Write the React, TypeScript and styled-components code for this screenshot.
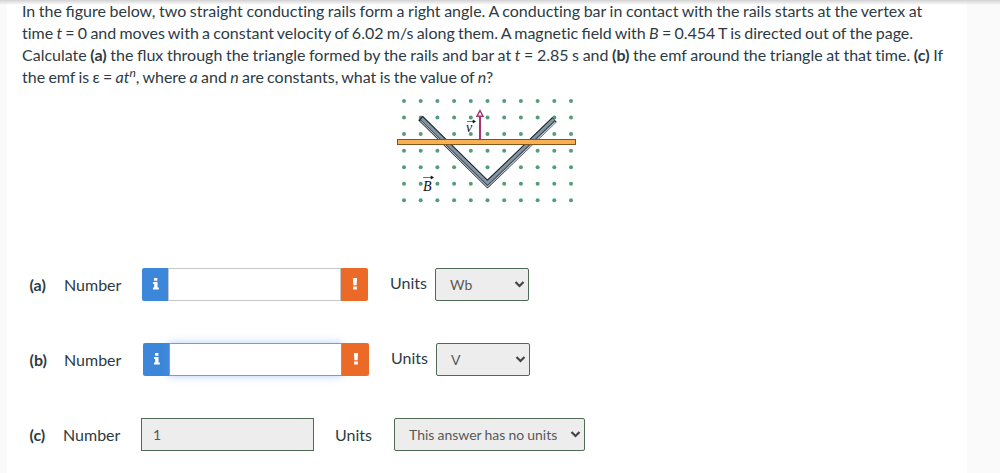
import React from "react";
import styled, { createGlobalStyle } from "styled-components";

const GlobalStyle = createGlobalStyle`
  * {
    box-sizing: border-box;
  }
  body {
    margin: 0;
    overflow: hidden;
    background: #fafafa;
    color: #2d3b45;
    font-family: Lato, sans-serif;
    font-size: 16px;
  }
`

const Page = styled.main`
  width: 960px;
  height: 473px;
  margin-left: 7px;
  padding-left: 15px;
  background: #fff;
`

const TopShadow = styled.div`
  position: absolute;
  top: 0;
  left: 0;
  right: 0;
  height: 5px;
  background: linear-gradient(#d2d2d2, rgba(255, 255, 255, 0));
`

const Question = styled.p`
  position: relative;
  margin: 0;
  line-height: 22px;
`

const Line = styled.span<{ $spacing: number }>`
  display: block;
  height: 22px;
  white-space: nowrap;
  word-spacing: ${({ $spacing }) => $spacing}px;
  font-variant-ligatures: none;

  sup {
    font-size: 12px;
    line-height: 0;
    vertical-align: 6px;
  }
`

// fi and fl are joined, the other pairs are not
const Joined = styled.span`
  font-variant-ligatures: normal;
`

const Figure = styled.svg`
  display: block;
  width: 190px;
  height: 115px;
  margin: 5px 0 0 370px;
`

const Answers = styled.div`
  display: flex;
  flex-direction: column;
  gap: 42px;
  margin-top: 60px;
`

const Row = styled.div`
  display: flex;
  align-items: center;
  height: 33px;
  padding-left: 7px;
`

const Part = styled.b<{ $width?: number }>`
  width: ${({ $width = 35 }) => $width}px;
  padding-left: 0.5px;
`

const Label = styled.span<{ $width: number }>`
  width: ${({ $width }) => $width}px;
`

const Units = styled.span<{ $width: number; $raised?: boolean }>`
  width: ${({ $width }) => $width}px;
  margin-left: ${({ $raised }) => ($raised ? 22 : 21)}px;
  padding-bottom: ${({ $raised }) => ($raised ? 4 : 0)}px;
`

const Group = styled.div`
  display: flex;
  width: 226px;
  height: 33px;
`

const Addon = styled.div<{ $color: string; $side: "left" | "right" }>`
  display: flex;
  flex: none;
  align-items: center;
  justify-content: center;
  width: ${({ $side }) => ($side === "left" ? 26 : 27)}px;
  padding-bottom: 2px;
  padding-left: ${({ $side }) => ($side === "left" ? 2 : 0)}px;
  background: ${({ $color }) => $color};
  border-radius: ${({ $side }) => ($side === "left" ? "2px 0 0 2px" : "0 2px 2px 0")};
`

const Input = styled.input<{ $focused?: boolean }>`
  flex: 1;
  min-width: 0;
  border: 1px solid ${({ $focused }) => ($focused ? "#719fd2" : "#c4c7c9")};
  outline: none;
  background: #fff;
  box-shadow: ${({ $focused }) => ($focused ? "0 0 8px rgba(80, 150, 235, 0.45)" : "none")};
`

const DoneInput = styled.input`
  width: 173px;
  height: 33px;
  padding: 0 11px;
  border: 1px solid #4f6b53;
  background: #ededed;
  color: #595959;
  font: 14px Lato, sans-serif;
`

const Select = styled.div<{ $width: number }>`
  display: flex;
  align-items: center;
  justify-content: space-between;
  width: ${({ $width }) => $width}px;
  height: 33px;
  padding: 0 3px 0 14px;
  border: 1px solid #4f6b53;
  border-radius: 2px;
  background: #ededed;
  color: #595959;
  font-size: 14px;
  word-spacing: -0.5px;
  white-space: nowrap;
`

const Chevron = () => (
  <svg width="11" height="9" viewBox="0 0 11 9">
    <path d="M1.5 2 L5.5 6 L9.5 2" fill="none" stroke="#444" strokeWidth="2.2" />
  </svg>
)

const InfoIcon = () => (
  <svg width="8" height="12" viewBox="0 0 8 12">
    <path d="M2 0h3.4v2.7H2zM1 4h4.5v5.4h1.3v2.2H1V9.4h1.2V6.1H1z" fill="#fff" />
  </svg>
)

const AlertIcon = () => (
  <svg width="6" height="12" viewBox="0 0 6 12">
    <path d="M.9 0h4.2l-.5 7.3H1.4zM1.1 8.6h3.8v3H1.1z" fill="#fff" />
  </svg>
)

const columns = Array.from({ length: 11 }, (_, i) => 12 + i * 16.7)
const rows = Array.from({ length: 7 }, (_, i) => 8 + i * 16.55)

const RailFigure = () => (
  <Figure viewBox="0 0 190 115">
    {rows.map((y) =>
      columns.map((x) => <circle key={`${x}-${y}`} cx={x} cy={y} r="2" fill="#559c78" />)
    )}
    {/* rails */}
    <g fill="none">
      <path d="M28.5 25 L95.5 91 L162.5 26.5" stroke="#20262c" strokeWidth="6.6" />
      <path d="M29.5 26.5 L95.5 91.8 L162.5 28" stroke="#c4ced6" strokeWidth="4" />
      <path d="M29.5 25.7 L95.5 90.5 L162 27" stroke="#3d4a55" strokeWidth="3.8" />
      <path d="M29.8 25.5 L95.5 89.9 L161.5 26.3" stroke="#8496a5" strokeWidth="2.8" />
    </g>
    {/* moving bar */}
    <rect x="5.5" y="46.5" width="178" height="5" fill="#f9b050" stroke="#80551f" />
    <path d="M88 46 V24" stroke="#a8326f" strokeWidth="2" />
    <path d="M85 23.2 L88 17.6 L91 23.2 Z" fill="#fff" stroke="#a8326f" strokeWidth="1.4" />
    {/* vector labels */}
    <g fill="#111" fontFamily="Liberation Serif, serif" fontStyle="italic">
      <text x="74" y="39" fontSize="14">v</text>
      <text x="31" y="98" fontSize="14">B</text>
    </g>
    <g fill="#111" stroke="#111" strokeWidth="0.6">
      <path d="M75 28.5 H82" />
      <path d="M81 27 L83.5 28.5 L81 30 Z" />
      <path d="M31 84.5 H40" />
      <path d="M39 83 L41.5 84.5 L39 86 Z" />
    </g>
  </Figure>
)

type NumberRowProps = { part: string; unit: string; focused?: boolean }

const NumberRow = ({ part, unit, focused }: NumberRowProps) => (
  <Row>
    <Part>({part})</Part>
    <Label $width={focused ? 79 : 78}>Number</Label>
    <Group>
      <Addon $color="#3c87d9" $side="left"><InfoIcon /></Addon>
      <Input $focused={focused} />
      <Addon $color="#eb6a28" $side="right"><AlertIcon /></Addon>
    </Group>
    <Units $width={45} $raised>Units</Units>
    <Select $width={94}>{unit}<Chevron /></Select>
  </Row>
)

const App = () => (
  <>
    <GlobalStyle />
    <Page>
      <TopShadow />
      <Question>
        <Line $spacing={-0.53}>
          In the <Joined>fi</Joined>gure below, two straight conducting rails form a right angle. A conducting bar in contact with the rails starts at the vertex at
        </Line>
        <Line $spacing={-0.86}>
          time <i>t</i> = 0 and moves with a constant velocity of 6.02 m/s along them. A magnetic <Joined>fi</Joined>eld with <i>B</i> = 0.454 T is directed out of the page.
        </Line>
        <Line $spacing={-0.5}>
          Calculate <b>(a)</b> the <Joined>fl</Joined>ux through the triangle formed by the rails and bar at <i>t</i> = 2.85 s and <b>(b)</b> the emf around the triangle at that time. <b>(c)</b> If
        </Line>
        <Line $spacing={-0.82}>
          the emf is ε = <i>at</i><sup><i>n</i></sup>, where <i>a</i> and <i>n</i> are constants, what is the value of <i>n</i>?
        </Line>
      </Question>
      <RailFigure />
      <Answers>
        <NumberRow part="a" unit="Wb" />
        <NumberRow part="b" unit="V" focused />
        <Row>
          <Part $width={34}>(c)</Part>
          <Label $width={78}>Number</Label>
          <DoneInput defaultValue="1" />
          <Units $width={59}>Units</Units>
          <Select $width={191}>This answer has no units<Chevron /></Select>
        </Row>
      </Answers>
    </Page>
  </>
)

export default App
